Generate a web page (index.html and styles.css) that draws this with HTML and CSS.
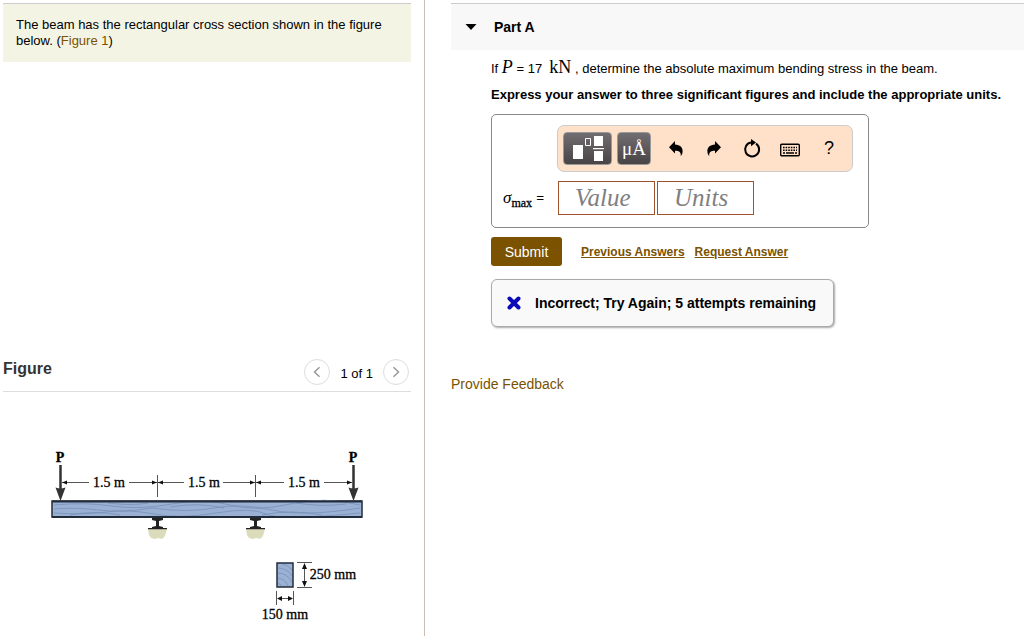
FILE: index.html
```html
<!DOCTYPE html>
<html lang="en">
<head>
  <meta charset="UTF-8">
  <meta name="viewport" content="width=device-width, initial-scale=1.0">
  <title>Part A</title>
  <link rel="stylesheet" href="styles.css">
</head>
<body>
  <div class="page">
    <aside class="left">
      <div class="problem">
        The beam has the rectangular cross section shown in the figure below. (<a href="#figure">Figure 1</a>)
      </div>

      <section class="figure" id="figure">
        <div class="figure-header">
          <h2>Figure</h2>
          <div class="pager">
            <button class="page-btn" aria-label="Previous figure">
              <svg width="12" height="12" viewBox="0 0 12 12"><path d="M8.500 1.200 3.500 6l5 4.800"/></svg>
            </button>
            <span>1 of 1</span>
            <button class="page-btn" aria-label="Next figure">
              <svg width="12" height="12" viewBox="0 0 12 12"><path d="M3.500 1.200l5 4.800-5 4.800"/></svg>
            </button>
          </div>
        </div>

        <svg class="beam" width="408" height="244" viewBox="3 392 408 244" role="img" aria-label="Beam with two loads P">
          <!-- loads -->
          <g class="load">
            <path class="shaft" d="M60.500 465V490M353.500 465V490"/>
            <path class="head" d="M55.500 487.500q5 2 10 0L60.500 501zM348.500 487.500q5 2 10 0L353.500 501z"/>
          </g>
          <text class="force" x="60" y="462">P</text>
          <text class="force" x="353" y="462">P</text>

          <!-- dimension lines -->
          <path class="dim" d="M62 482.500H89M129 482.500H184M223 482.500H284M324 482.500H352M157.500 475V497M255.500 475V497"/>
          <path class="tip" d="M62 482.500l5-2v4zM157 482.500l-5-2v4zM158 482.500l5-2v4zM255 482.500l-5-2v4zM256 482.500l5-2v4zM352 482.500l-5-2v4z"/>
          <text x="109" y="487">1.5 m</text>
          <text x="204" y="487">1.5 m</text>
          <text x="304" y="487">1.5 m</text>

          <!-- beam -->
          <rect class="wood" x="52" y="501" width="310" height="16"/>
          <path class="grain" d="M54 505q30-3 58 1t60-2 58 1 60-1 70 1M54 509q20-2 44 1t54-2q36 5 62 0t58 2 88-2M54 513q30 2 52-1t48 2 62-1 50 1 94-1M70 515q24-5 50 0M170 507q28-5 54 1M262 515q28-6 60 0M108 503q24 3 40 0M296 503q24 4 50 1"/>
          <path class="edge" d="M52 501.500H362M52 517H362"/>

          <!-- supports -->
          <g id="support">
            <path class="ground" d="M148 529h19l-2 7-3 3-4-1-3 1-4-1-2-3z"/>
            <path class="steel" d="M152 518h11v2l-4 1v5l4 1v1h4v1.300h-19V528h4v-1l4-1v-5l-4-1z"/>
          </g>
          <use href="#support" x="98"/>

          <!-- cross section -->
          <rect class="wood" x="277" y="563" width="16" height="24"/>
          <path class="grain" d="M278 568q9 0 14 8M278 573q9 0 14 9M278 578q7 1 10 8M278 583l4 3M282 564q6 1 10 6"/>
          <path class="dim" d="M297 562.500H312M297 587.500H312M304.500 564V586M276.500 591V605M293.500 591V605M278 598.500H292"/>
          <path class="tip" d="M304.500 563l-2.500 6h5zM304.500 587l-2.500-6h5zM277 598.500l5-2.500v5zM293 598.500l-5-2.500v5z"/>
          <text x="333" y="579">250 mm</text>
          <text x="285" y="619">150 mm</text>
        </svg>
      </section>
    </aside>

    <main class="right">
      <div class="part-header">
        <svg width="12" height="8" viewBox="0 0 12 8"><path d="M0.500 1h11L6 7z"/></svg>
        <h1>Part A</h1>
      </div>

      <div class="part-body">
        <p class="question">If <i class="math">P</i> = 17&nbsp; <span class="math">kN</span> , determine the absolute maximum bending stress in the beam.</p>
        <p class="instructions">Express your answer to three significant figures and include the appropriate units.</p>

        <form class="answer" id="answer">
          <div class="toolbar">
            <button type="button" class="dark templates" aria-label="Templates">
              <svg width="32" height="26" viewBox="0 0 32 26">
                <path fill="#fff" d="M1 9h10v14H1zM22 0h9v10h-9zM22 15h9v10h-9zM21 12h11v1.200H21z"/>
                <path fill="none" stroke="#fff" d="M13.500 2.500h5v7h-5z"/>
              </svg>
            </button>
            <button type="button" class="dark symbols">μÅ</button>
            <button type="button" class="tool" aria-label="Undo">
              <svg width="16" height="16" viewBox="0 0 16 16"><path d="M1 6.200 7 0v3.600c5 .3 7.800 3 7.600 6.900-.1 2-.8 3.800-1.900 4.500.6-3.400-1-5.300-5.700-5.300V12.500z"/></svg>
            </button>
            <button type="button" class="tool" aria-label="Redo">
              <svg width="16" height="16" viewBox="0 0 16 16"><path d="M15 6.200 9 0v3.600C4 3.900 1.200 6.600 1.400 10.500c.1 2 .8 3.800 1.900 4.500-.6-3.400 1-5.300 5.700-5.300V12.500z"/></svg>
            </button>
            <button type="button" class="tool" aria-label="Reset">
              <svg width="18" height="20" viewBox="0 0 18 20"><path d="M13 4.700A7 7 0 1 1 8 3.600" fill="none" stroke="#000" stroke-width="2"/><path d="M8 0l5 3.600-5 3.600z"/></svg>
            </button>
            <button type="button" class="tool" aria-label="Keyboard">
              <svg class="keys" width="20" height="14" viewBox="0 0 20 14">
                <rect x="0.700" y="1.200" width="18.600" height="11.600" rx="1" fill="none" stroke="#000" stroke-width="1.400"/>
                <path d="M3 4.500h14M3 7.200h14" stroke="#000" stroke-width="1.600" stroke-dasharray="1.600 1"/>
                <path d="M3 10h2m1 0h8m1 0h2" stroke="#000" stroke-width="1.400"/>
              </svg>
            </button>
            <button type="button" class="tool help" aria-label="Help">?</button>
          </div>
          <div class="fields">
            <label for="value"><i>σ</i><sub>max</sub> <b>=</b></label>
            <input type="text" id="value" placeholder="Value">
            <input type="text" id="units" placeholder="Units" aria-label="Units">
          </div>
        </form>

        <div class="actions">
          <button class="submit" type="submit" form="answer">Submit</button>
          <a href="#">Previous Answers</a>
          <a href="#">Request Answer</a>
        </div>

        <div class="result">
          <svg width="14" height="14" viewBox="0 0 14 14"><path d="M2.500 2.500l9 9M11.500 2.500l-9 9"/></svg>
          <span>Incorrect; Try Again; 5 attempts remaining</span>
        </div>
      </div>

      <a class="feedback" href="#">Provide Feedback</a>
    </main>
  </div>
</body>
</html>
```

FILE: styles.css
```css
* {
  box-sizing: border-box;
}

body {
  margin: 0;
  font-family: "Liberation Sans", Arial, sans-serif;
  font-size: 13px;
  line-height: 16px;
  color: #000;
  background-color: #fff;
}

h1, h2, p {
  margin: 0;
}

a {
  color: #7a5200;
}

button {
  padding: 0;
  border: none;
  background: none;
  font-family: inherit;
  cursor: pointer;
}

.page {
  display: flex;
  min-height: 100vh;
}

/* left column */
.left {
  flex: none;
  width: 425px;
  padding: 3px 13px 0 3px;
  border-right: 1px solid #cdbfb4;
}

.problem {
  padding: 13px;
  border-top: 1px solid #ccc;
  background-color: #f4f4e4;
}

.problem a {
  text-decoration: none;
}

.figure {
  margin-top: 297px;
}

.figure-header {
  display: flex;
  justify-content: space-between;
  height: 33px;
  padding-right: 2px;
  border-bottom: 1px solid #ddd;
}

.figure-header h2 {
  font-size: 16px;
  line-height: 20px;
  color: #333;
}

.pager {
  display: flex;
  gap: 10px;
  line-height: 30px;
}

.page-btn {
  display: flex;
  justify-content: center;
  align-items: center;
  width: 26px;
  height: 26px;
  border: 1px solid #ddd;
  border-radius: 50%;
}

.page-btn path {
  fill: none;
  stroke: #999;
  stroke-width: 1.5;
}

.beam {
  display: block;
  font-family: "Liberation Serif", "Times New Roman", serif;
  font-size: 14px;
}

.beam text {
  text-anchor: middle;
  stroke: #000;
  stroke-width: 0.3;
}

.beam .force {
  font-weight: bold;
}

.shaft {
  stroke: #333;
  stroke-width: 2.5;
}

.head {
  fill: #333;
}

.dim {
  fill: none;
  stroke: #555;
}

.tip {
  fill: #111;
}

.wood {
  fill: #9bb1d4;
  stroke: #222b3a;
  stroke-width: 1.5;
}

.grain {
  fill: none;
  stroke: #7790b8;
  stroke-width: 0.8;
}

.edge {
  stroke: #222b3a;
  stroke-width: 2;
}

.ground {
  fill: #dcdcbc;
}

.steel {
  fill: #222;
}

/* right column */
.right {
  flex: 1;
  min-width: 0;
  padding: 3px 0 0 26px;
}

.part-header {
  display: flex;
  align-items: center;
  gap: 17px;
  height: 47px;
  padding-left: 14px;
  border-top: 1px solid #ccc;
  background-color: #f8f8f8;
}

.part-header h1 {
  font-size: 14px;
}

.part-body {
  padding: 9px 0 0 40px;
}

.question {
  line-height: 20px;
}

.math {
  font-family: "Liberation Serif", "Times New Roman", serif;
  font-size: 18px;
  line-height: 16px;
}

.instructions {
  margin-top: 8px;
  font-weight: bold;
}

.answer {
  width: 378px;
  height: 114px;
  margin-top: 11px;
  padding: 10px 15px 0 11px;
  border: 1px solid #888;
  border-radius: 5px;
}

.toolbar {
  display: flex;
  align-items: center;
  height: 47px;
  margin-left: 54px;
  padding-left: 5px;
  border: 1px solid #ccc;
  border-radius: 7px;
  background-color: #ffe0c9;
}

.dark {
  display: flex;
  justify-content: center;
  align-items: center;
  height: 33px;
  border: 1px solid #999;
  border-radius: 4px;
  background: linear-gradient(#726d70, #484345);
  color: #fff;
}

.templates {
  width: 49px;
}

.symbols {
  width: 34px;
  margin: 0 6px 0 5px;
  font-family: "Liberation Serif", "Times New Roman", serif;
  font-size: 19px;
}

.tool {
  display: flex;
  justify-content: center;
  align-items: center;
  width: 38px;
  height: 33px;
}

.keys {
  margin-top: 3px;
}

.help {
  width: 40px;
  font-size: 18px;
}

.fields {
  display: flex;
  gap: 2px;
  margin-top: 9px;
}

.fields label {
  width: 53px;
  font-family: "Liberation Serif", "Times New Roman", serif;
  font-size: 17px;
  line-height: 34px;
  white-space: nowrap;
}

.fields sub {
  font-size: 12px;
  line-height: 1;
  -webkit-text-stroke: 0.3px #000;
}

.fields b {
  font-size: 14px;
}

.fields input {
  width: 97px;
  height: 34px;
  padding: 0 16px;
  border: 1px solid #a0522d;
  font-family: "Liberation Serif", "Times New Roman", serif;
  font-size: 25px;
  font-style: italic;
}

.fields input::placeholder {
  color: #808080;
}

.actions {
  display: flex;
  align-items: center;
  gap: 10px;
  margin-top: 9px;
  font-size: 12px;
  font-weight: bold;
}

.submit {
  width: 71px;
  height: 29px;
  margin-right: 9px;
  border-radius: 3px;
  background-color: #7a5200;
  color: #fff;
  font-size: 14px;
}

.result {
  display: flex;
  align-items: center;
  gap: 14px;
  width: 343px;
  height: 48px;
  margin-top: 13px;
  padding-left: 15px;
  border: 1px solid #aaa;
  border-radius: 6px;
  background-color: #f9f9f9;
  box-shadow: 1px 1px 2px #aaa;
  font-size: 14px;
  font-weight: bold;
}

.result path {
  stroke: #0a0ab8;
  stroke-width: 4;
  stroke-linecap: round;
}

.feedback {
  display: inline-block;
  margin-top: 49px;
  font-size: 14px;
  text-decoration: none;
}
```
